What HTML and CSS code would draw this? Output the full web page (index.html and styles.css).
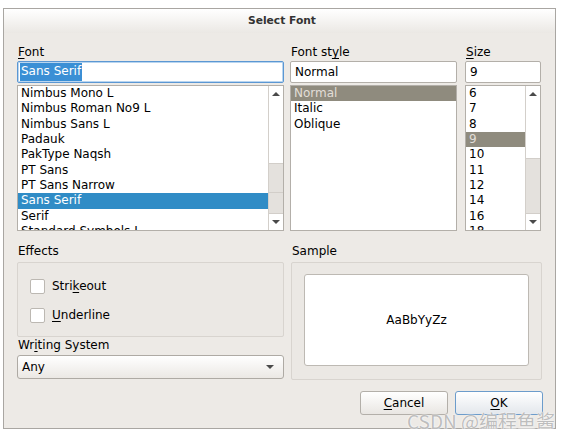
FILE: index.html
```html
<!DOCTYPE html>
<html>
<head>
<meta charset="utf-8">
<link rel="stylesheet" href="styles.css">
</head>
<body>
<div class="dialog">
  <div class="titlebar">Select Font</div>
  <div class="content">
    <div class="top">
      <div class="col col-font">
        <div class="label"><u>F</u>ont</div>
        <div class="edit focus"><span class="sel">Sans Serif</span></div>
        <div class="list">
          <div class="items">
            <div class="item">Nimbus Mono L</div>
            <div class="item">Nimbus Roman No9 L</div>
            <div class="item">Nimbus Sans L</div>
            <div class="item">Padauk</div>
            <div class="item">PakType Naqsh</div>
            <div class="item">PT Sans</div>
            <div class="item">PT Sans Narrow</div>
            <div class="item current-blue">Sans Serif</div>
            <div class="item">Serif</div>
            <div class="item">Standard Symbols L</div>
          </div>
          <div class="vscroll">
            <div class="sbtn"><span class="tri-up"></span></div>
            <div class="track"><div class="thumb thumb-font"><div class="thumb-line"></div></div></div>
            <div class="sbtn"><span class="tri-down"></span></div>
          </div>
        </div>
      </div>
      <div class="col col-style">
        <div class="label">Font st<u>y</u>le</div>
        <div class="edit"><span>Normal</span></div>
        <div class="list">
          <div class="items">
            <div class="item current-grey">Normal</div>
            <div class="item">Italic</div>
            <div class="item">Oblique</div>
          </div>
        </div>
      </div>
      <div class="col col-size">
        <div class="label"><u>S</u>ize</div>
        <div class="edit"><span>9</span></div>
        <div class="list">
          <div class="items">
            <div class="item">6</div>
            <div class="item">7</div>
            <div class="item">8</div>
            <div class="item current-grey">9</div>
            <div class="item">10</div>
            <div class="item">11</div>
            <div class="item">12</div>
            <div class="item">14</div>
            <div class="item">16</div>
            <div class="item">18</div>
          </div>
          <div class="vscroll">
            <div class="sbtn"><span class="tri-up"></span></div>
            <div class="track"><div class="thumb thumb-size"></div></div>
            <div class="sbtn"><span class="tri-down"></span></div>
          </div>
        </div>
      </div>
    </div>
    <div class="bottom">
      <div class="left">
        <div class="label">Effects</div>
        <div class="group effects">
          <div class="check"><span class="box"></span><span>Stri<u>k</u>eout</span></div>
          <div class="check"><span class="box"></span><span><u>U</u>nderline</span></div>
        </div>
        <div class="label ws-label">Wr<u>i</u>ting System</div>
        <div class="combo"><span>Any</span><span class="tri-down combo-arrow"></span></div>
      </div>
      <div class="right">
        <div class="label">Sample</div>
        <div class="group sample">
          <div class="preview">AaBbYyZz</div>
        </div>
      </div>
    </div>
    <div class="buttons">
      <div class="btn btn-cancel"><span><u>C</u>ancel</span></div>
      <div class="btn btn-ok"><span><u>O</u>K</span></div>
    </div>
  </div>
  <div class="watermark">CSDN @编程鱼酱</div>
</div>
</body>
</html>
```
FILE: styles.css
```css
* { box-sizing: border-box; }
html, body { margin: 0; padding: 0; background: #ffffff; }
body {
  font-family: "DejaVu Sans", "Noto Sans CJK SC", sans-serif;
  font-size: 12px;
  line-height: 15px;
  color: #000;
}
u { text-decoration: underline; text-underline-offset: 2px; text-decoration-thickness: 1px; }

.dialog {
  position: relative;
  margin: 8px 0 0 3px;
  width: 553px;
  height: 421px;
  border: 1px solid #a9a6a2;
  background: #edeae6;
}
.titlebar {
  height: 24px;
  background: linear-gradient(#ffffff, #ebe8e4);
  text-align: center;
  font-size: 10.7px;
  font-weight: bold;
  line-height: 23px;
  color: #333;
  padding-left: 5px;
}
.content { padding: 12px 13px 0 13px; }

.top { display: flex; }
.col-font { width: 267px; }
.col-style { width: 167px; margin-left: 6px; }
.col-size { width: 76px; margin-left: 8px; }

.label { height: 15px; padding-left: 1px; white-space: nowrap; }

.edit {
  margin-top: 1px;
  height: 22px;
  border: 1px solid #b3afa9;
  border-radius: 2px;
  background: #fff;
  display: flex;
  align-items: center;
  padding-left: 4px;
}
.edit.focus {
  border-color: #5b97d3;
  box-shadow: inset 0 0 0 1px #b9d5ef;
  padding-left: 2px;
}
.sel { background: #3a8fd5; color: #fff; padding: 1px 1px 2px 1px; }

.list {
  margin-top: 2px;
  height: 146px;
  border: 1px solid #b3afa9;
  background: #fff;
  display: flex;
  overflow: hidden;
}
.items { flex: 1; overflow: hidden; }
.item { height: 15.35px; line-height: 15.35px; padding-left: 3px; white-space: nowrap; }
.current-blue { background: #308cc6; color: #fff; }
.current-grey { background: #8f8b7e; color: #e2ded8; }

.vscroll {
  width: 15px;
  border-left: 1px solid #d3cfca;
  display: flex;
  flex-direction: column;
  background: #fff;
}
.sbtn { height: 16px; display: flex; align-items: center; justify-content: center; }
.track { flex: 1; display: flex; flex-direction: column; }
.thumb {
  flex: 1;
  background: #e4e1dd;
  border-top: 1px solid #d2cec9;
  border-bottom: 1px solid #d2cec9;
}
.thumb-font { margin-top: 61px; }
.thumb-size { margin-top: 56px; }
.thumb-line { margin-top: 28px; height: 1px; background: #d2cec9; }

.tri-up, .tri-down { width: 0; height: 0; border-left: 4px solid transparent; border-right: 4px solid transparent; }
.tri-up { border-bottom: 4px solid #4a4a4a; }
.tri-down { border-top: 4px solid #4a4a4a; }

.bottom { display: flex; margin-top: 13px; }
.left { width: 267px; }
.right { width: 251px; margin-left: 7px; }

.group {
  margin-top: 3px;
  border: 1px solid #d8d4cf;
  border-radius: 2px;
  background: #ebe8e4;
}
.effects { height: 75px; padding: 16px 0 0 12px; }
.check { display: flex; align-items: center; height: 15px; margin-bottom: 13.5px; }
.box {
  width: 15px; height: 15px;
  border: 1px solid #bcb8b2;
  border-radius: 2px;
  background: #fff;
  margin-right: 7px;
}
.ws-label { margin-top: 1px; }
.combo {
  margin-top: 2px;
  height: 24px;
  border: 1px solid #aeaaa4;
  border-radius: 3px;
  background: linear-gradient(#ffffff, #ebe8e4);
  display: flex;
  align-items: center;
  justify-content: space-between;
  padding: 0 9px 0 4px;
}

.sample { height: 118px; padding: 11px 12px 0 12px; }
.preview {
  height: 92px;
  background: #fff;
  border: 1px solid #bdb9b3;
  border-radius: 3px;
  display: flex;
  align-items: center;
  justify-content: center;
}

.buttons { display: flex; justify-content: flex-end; margin-top: 11px; }
.btn {
  height: 24px;
  border-radius: 3px;
  display: flex;
  align-items: center;
  justify-content: center;
}
.btn-cancel {
  width: 88px;
  border: 1px solid #b3afa9;
  background: linear-gradient(#ffffff, #e9e6e2);
  margin-right: 7px;
}
.btn-ok {
  width: 88px;
  border: 1px solid #6c9ccb;
  background: linear-gradient(#ffffff, #e3e7ec);
  margin-right: -1px;
}

.watermark {
  position: absolute;
  right: 0px;
  bottom: -4px;
  font-family: "Noto Sans CJK SC", "DejaVu Sans", sans-serif;
  font-size: 19px;
  line-height: 22px;
  color: #bdbdbd;
  text-shadow: 0 0 1px #fff, 0 0 2px #fff;
  white-space: nowrap;
}
```
